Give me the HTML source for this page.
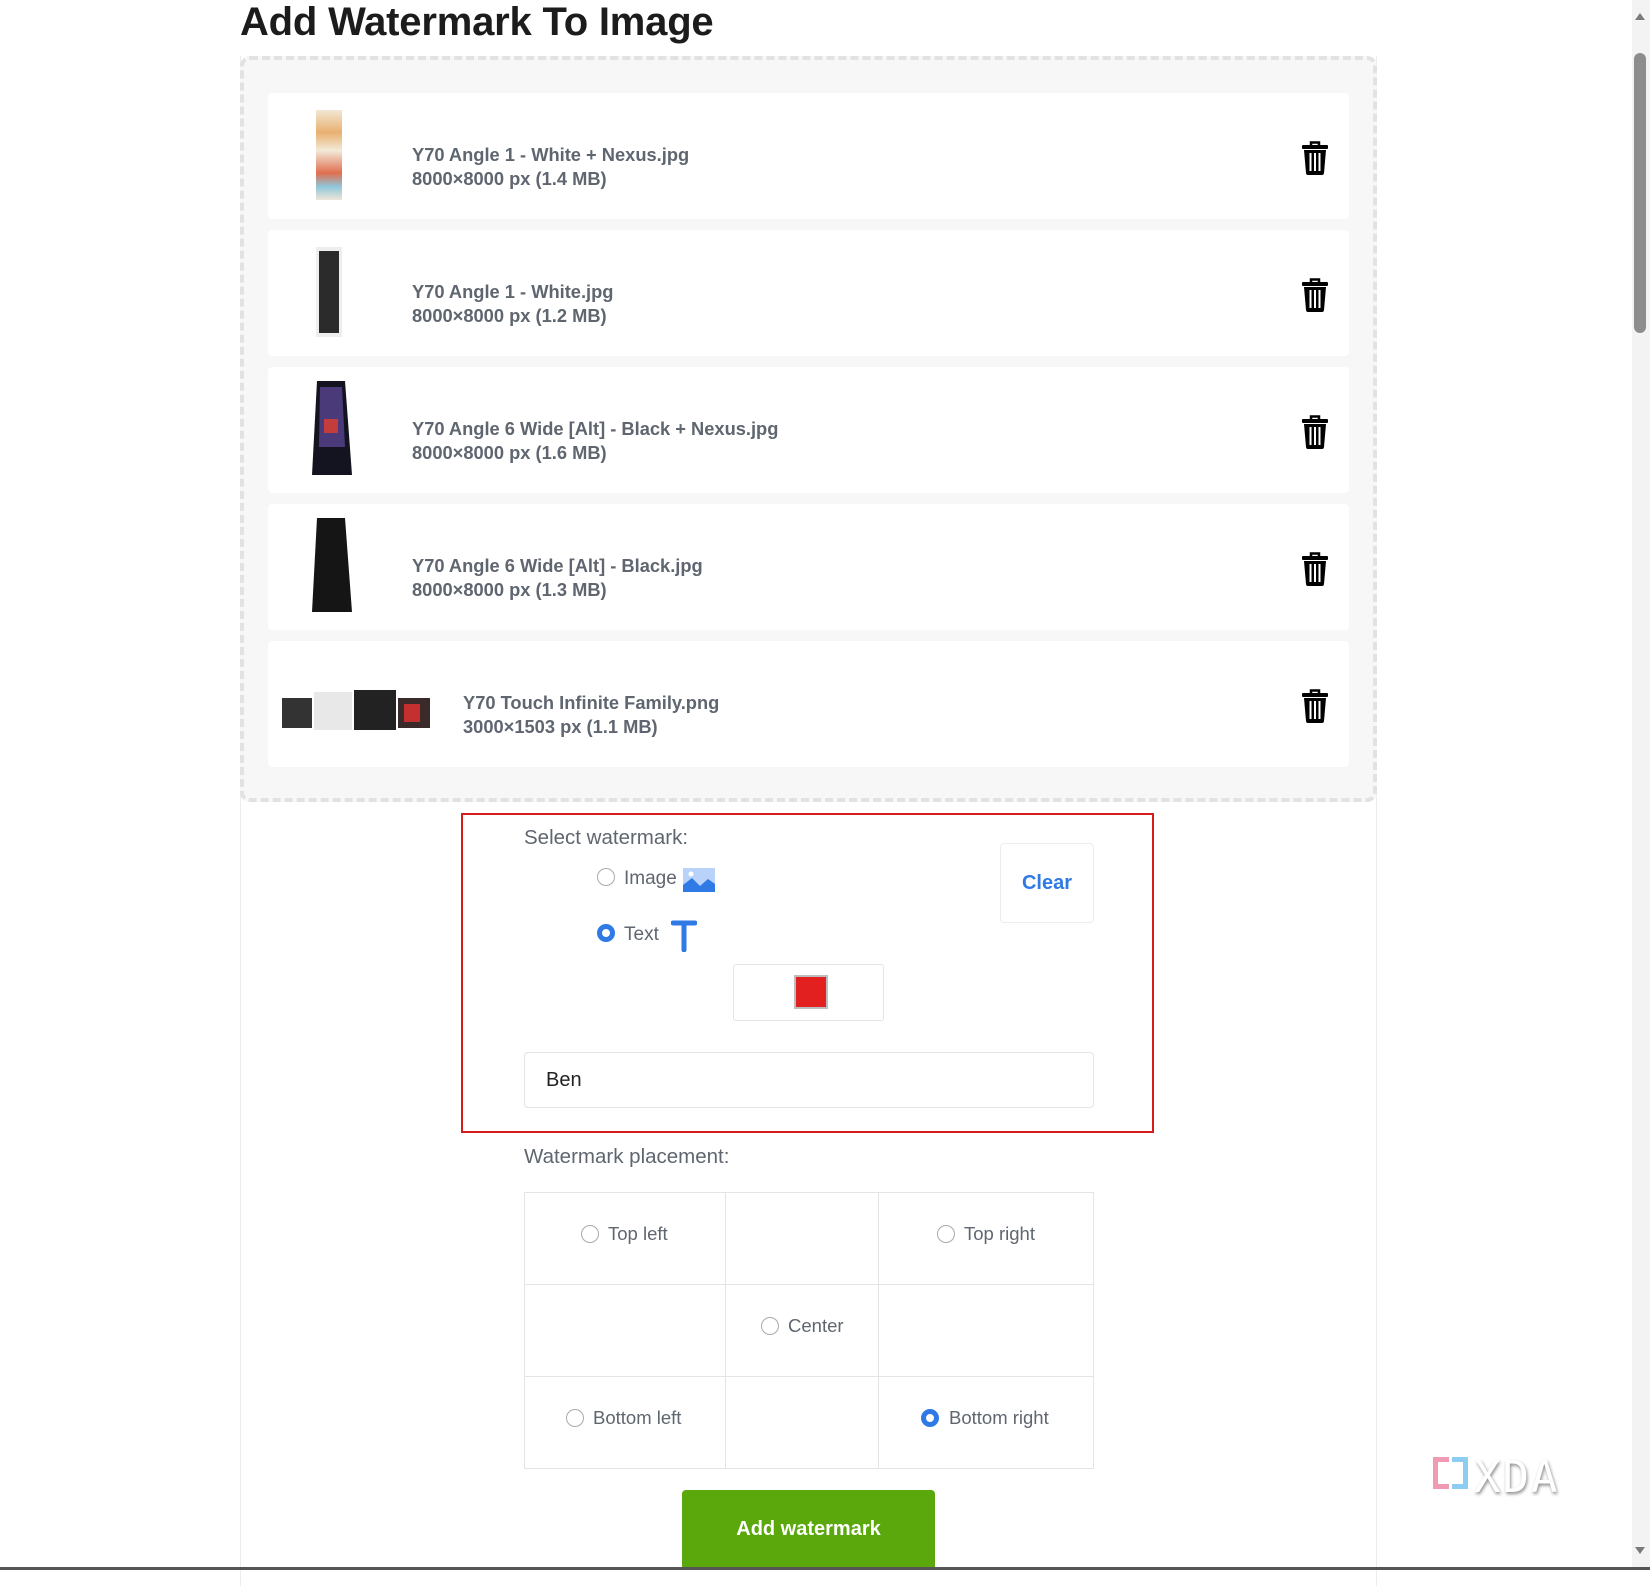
<!DOCTYPE html>
<html><head><meta charset="utf-8"><style>
*{box-sizing:border-box;margin:0;padding:0}
body{width:1650px;height:1570px;background:#fff;position:relative;overflow:hidden;font-family:"Liberation Sans",Arial,sans-serif}
.a{position:absolute}
h1{position:absolute;left:240px;top:0px;font-size:40px;font-weight:bold;color:#1c1c1c;letter-spacing:-0.2px}
.panel{left:240px;top:56px;width:1137px;height:1530px;border-left:1px solid #ececec;border-right:1px solid #ececec}
.drop{left:240px;top:56px;width:1137px;height:746px;background:#f7f7f7;border:4px dashed #e2e2e2;border-radius:10px}
.row{position:absolute;left:268px;width:1081px;height:126px;background:#fff;border-radius:4px}
.nm{position:absolute;left:144px;top:50px;font-size:18.3px;font-weight:bold;color:#5f6670;line-height:24px}
.tr{position:absolute;left:1033px;top:48px}
.lbl{font-size:20.5px;color:#5f6670}
.radio{position:absolute;width:18px;height:18px;border:1.5px solid #aaa;border-radius:50%;background:#fff}
.radio.on{border:5px solid #2f7ae5}
.grid{left:524px;top:1192px;width:570px;height:277px;border:1px solid #e4e4e4}
.cell{position:absolute;font-size:18.5px;color:#5f6670}
</style></head><body>
<h1>Add Watermark To Image</h1>
<div class="a panel"></div>
<div class="a drop"></div>

<svg width="0" height="0" style="position:absolute"><defs><symbol id="tr" viewBox="0 0 28 34"><path d="M10 4V1.5h8V4" fill="none" stroke="#000" stroke-width="2.5"/><rect x="1" y="4" width="26" height="4" rx="1" fill="#000"/><path d="M3 9h22l-2 23q-.2 2-2 2H7q-1.8 0-2-2z" fill="#000"/><path d="M9.5 12v18M14 12v18M18.5 12v18" stroke="#fff" stroke-width="2"/></symbol></defs></svg>

<div class="row" style="top:93px"><div class="a" style="left:48px;top:17px;width:26px;height:90px;background:linear-gradient(#f2e7d3,#e8b070 25%,#f2ead8 45%,#e06f4f 70%,#8fc6d9 85%,#efe6d8)"></div><div class="nm">Y70 Angle 1 - White + Nexus.jpg<br>8000×8000 px (1.4 MB)</div><svg class="tr" width="28" height="34"><use href="#tr"/></svg></div>
<div class="row" style="top:230px"><div class="a" style="left:48px;top:17px;width:26px;height:90px;background:#eee;padding:4px 3px"><div style="width:20px;height:82px;background:#2b2b2b"></div></div><div class="nm">Y70 Angle 1 - White.jpg<br>8000×8000 px (1.2 MB)</div><svg class="tr" width="28" height="34"><use href="#tr"/></svg></div>
<div class="row" style="top:367px"><svg class="a" style="left:42px;top:12px" width="44" height="98"><path d="M7 2h28l7 94H2z" fill="#141420"/><path d="M10 8h22l3 60H9z" fill="#4a3a7a"/><rect x="14" y="40" width="14" height="14" fill="#c43d3d"/></svg><div class="nm">Y70 Angle 6 Wide [Alt] - Black + Nexus.jpg<br>8000×8000 px (1.6 MB)</div><svg class="tr" width="28" height="34"><use href="#tr"/></svg></div>
<div class="row" style="top:504px"><svg class="a" style="left:42px;top:12px" width="44" height="98"><path d="M7 2h28l7 94H2z" fill="#151515"/></svg><div class="nm">Y70 Angle 6 Wide [Alt] - Black.jpg<br>8000×8000 px (1.3 MB)</div><svg class="tr" width="28" height="34"><use href="#tr"/></svg></div>
<div class="row" style="top:641px"><svg class="a" style="left:12px;top:47px" width="152" height="44"><rect x="2" y="10" width="30" height="30" fill="#333"/><rect x="34" y="4" width="38" height="38" fill="#e8e8e8"/><rect x="74" y="2" width="42" height="40" fill="#222"/><rect x="118" y="10" width="32" height="30" fill="#3a2a2a"/><rect x="124" y="16" width="16" height="18" fill="#c43030"/></svg><div class="nm" style="left:195px">Y70 Touch Infinite Family.png<br>3000×1503 px (1.1 MB)</div><svg class="tr" width="28" height="34"><use href="#tr"/></svg></div>

<div class="a" style="left:461px;top:813px;width:693px;height:320px;border:2px solid #d81b1b"></div>
<div class="a lbl" style="left:524px;top:826px">Select watermark:</div>
<div class="radio" style="left:597px;top:868px"></div>
<div class="a lbl" style="left:624px;top:868px;font-size:19px">Image</div>
<svg class="a" style="left:683px;top:868px" width="32" height="24"><rect width="32" height="24" fill="#b8d2fa"/><path d="M0 24V17l9-7 8 8 8-7 7 5v8z" fill="#2f7ae5"/><circle cx="8" cy="6" r="2.5" fill="#fff"/></svg>
<div class="radio on" style="left:597px;top:924px"></div>
<div class="a lbl" style="left:624px;top:924px;font-size:19px">Text</div>
<svg class="a" style="left:671px;top:920px" width="26" height="32"><path d="M2 3h22M13 3v27" stroke="#2f7ae5" stroke-width="5" stroke-linecap="round"/></svg>
<div class="a" style="left:1000px;top:843px;width:94px;height:80px;border:1px solid #ececec;border-radius:4px;color:#2f7ae5;font-weight:bold;font-size:20px;text-align:center;line-height:78px">Clear</div>
<div class="a" style="left:733px;top:964px;width:151px;height:57px;border:1px solid #e4e4e4;border-radius:3px"></div>
<div class="a" style="left:794px;top:975px;width:34px;height:34px;background:#e32020;border:2px solid #bdbdbd"></div>
<div class="a" style="left:524px;top:1052px;width:570px;height:56px;border:1px solid #e4e4e4;border-radius:4px;font-size:20px;color:#222;padding-left:21px;line-height:54px">Ben</div>

<div class="a lbl" style="left:524px;top:1145px">Watermark placement:</div>
<div class="a grid"></div>
<div class="a" style="left:725px;top:1192px;width:1px;height:277px;background:#e4e4e4"></div>
<div class="a" style="left:878px;top:1192px;width:1px;height:277px;background:#e4e4e4"></div>
<div class="a" style="left:524px;top:1284px;width:570px;height:1px;background:#e4e4e4"></div>
<div class="a" style="left:524px;top:1376px;width:570px;height:1px;background:#e4e4e4"></div>
<div class="radio" style="left:581px;top:1225px"></div><div class="cell" style="left:608px;top:1223px">Top left</div>
<div class="radio" style="left:937px;top:1225px"></div><div class="cell" style="left:964px;top:1223px">Top right</div>
<div class="radio" style="left:761px;top:1317px"></div><div class="cell" style="left:788px;top:1315px">Center</div>
<div class="radio" style="left:566px;top:1409px"></div><div class="cell" style="left:593px;top:1407px">Bottom left</div>
<div class="radio on" style="left:921px;top:1409px"></div><div class="cell" style="left:949px;top:1407px">Bottom right</div>
<div class="a" style="left:682px;top:1490px;width:253px;height:80px;background:#5aa80b;border-radius:4px;color:#fff;font-weight:bold;font-size:20px;text-align:center;line-height:78px">Add watermark</div>

<div class="a" style="left:1433px;top:1457px;width:16px;height:32px;border:5px solid #f09ab4;border-right:none"></div>
<div class="a" style="left:1452px;top:1457px;width:16px;height:32px;border:5px solid #8dcdf2;border-left:none"></div>
<div class="a" style="left:1474px;top:1452px;font-size:44px;color:#fff;text-shadow:1px 2px 3px #888;letter-spacing:2px;font-family:'DejaVu Sans Mono',monospace">XDA</div>

<div class="a" style="left:1632px;top:0;width:18px;height:1570px;background:#f3f3f3"></div>
<div class="a" style="left:1634px;top:53px;width:12px;height:280px;background:#8d8d8d;border-radius:6px"></div>
<div class="a" style="left:1635px;top:8px;width:0;height:0;border:5px solid transparent;border-bottom:7px solid #7a7a7a"></div>
<div class="a" style="left:1635px;top:1547px;width:0;height:0;border:5px solid transparent;border-top:7px solid #7a7a7a"></div>
<div class="a" style="left:0;top:1567px;width:1650px;height:3px;background:#555"></div>
</body></html>
